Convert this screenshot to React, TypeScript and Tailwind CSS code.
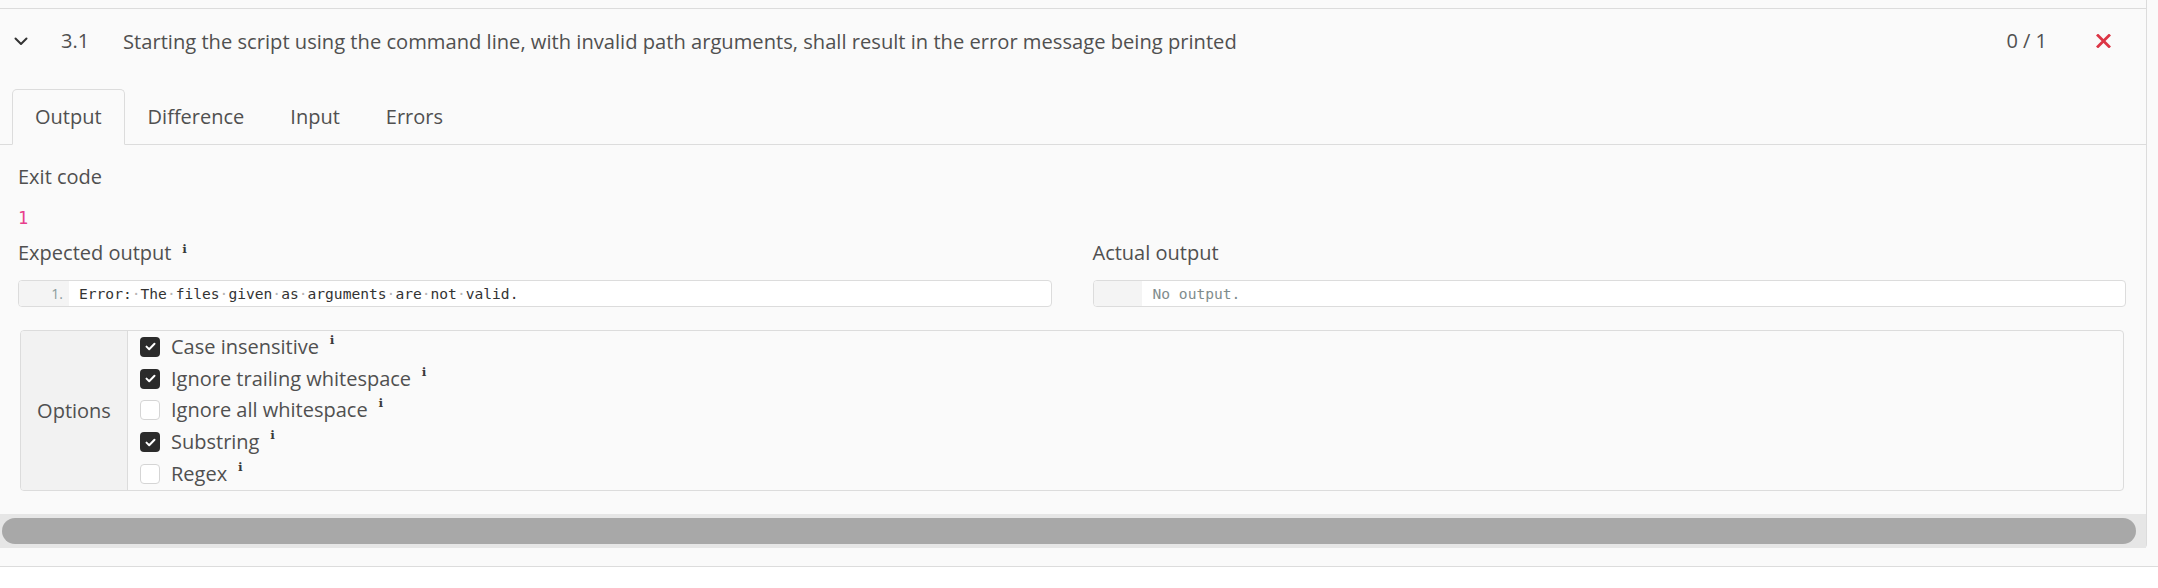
import React from "react";

const SANS = { fontFamily: '"Open Sans", "Noto Sans", sans-serif' };

function Info() {
  return (
    <span
      className="relative top-[-7px] ml-[11px] text-[12px] leading-none text-[#3a3a3a]"
      style={{ fontFamily: '"DejaVu Sans", sans-serif' }}
    >
      ℹ
    </span>
  );
}

function Check({ checked }: { checked: boolean }) {
  return checked ? (
    <span className="flex h-[20px] w-[20px] items-center justify-center rounded-[4px] bg-[#2b2b2b]">
      <svg width="11" height="9" viewBox="0 0 11 9" fill="none">
        <path d="M1.5 4.6 L4.2 7.2 L9.5 1.8" stroke="#fff" strokeWidth="2" strokeLinecap="round" strokeLinejoin="round" />
      </svg>
    </span>
  ) : (
    <span className="h-[20px] w-[20px] rounded-[4px] border border-[#d5d5d5] bg-white" />
  );
}

function CodeLine({ text }: { text: string }) {
  const parts = text.split(" ");
  return (
    <span>
      {parts.map((p, i) => (
        <React.Fragment key={i}>
          {i > 0 && <span className="text-[#b5b5b5]">·</span>}
          {p}
        </React.Fragment>
      ))}
    </span>
  );
}

export default function App() {
  const options: [string, boolean][] = [
    ["Case insensitive", true],
    ["Ignore trailing whitespace", true],
    ["Ignore all whitespace", false],
    ["Substring", true],
    ["Regex", false],
  ];
  return (
    <div className="h-[588px] w-[2158px] overflow-hidden bg-white text-[20px] text-[#505050]" style={SANS}>
      <div className="border-b border-[#dcdcdc] bg-[#fafafa] pb-[18px]">
        <div className="w-[2147px] rounded-br-[4px] border-r border-[#dcdcdc] pt-[8px]">
          <div className="border-t border-[#dcdcdc]">
            {/* header */}
            <div className="flex h-[64px] items-center">
              <div className="flex w-[61px] pl-[14px]">
                <svg width="14" height="9" viewBox="0 0 14 9" fill="none">
                  <path d="M1.5 1.5 L7 7 L12.5 1.5" stroke="#333" strokeWidth="2" strokeLinecap="round" strokeLinejoin="round" />
                </svg>
              </div>
              <div className="w-[62px] leading-[30px]">3.1</div>
              <div className="flex-1 text-[20.15px] leading-[30px]">
                Starting the script using the command line, with invalid path arguments, shall result in the error message being printed
              </div>
              <div className="leading-[30px]">0 / 1</div>
              <div className="ml-[49px] mr-[35px] flex">
                <svg width="15" height="14" viewBox="0 0 15 14" fill="none">
                  <path d="M2 1.5 L13 12.5 M13 1.5 L2 12.5" stroke="#dc3545" strokeWidth="2.8" strokeLinecap="square" />
                </svg>
              </div>
            </div>
            {/* tabs */}
            <div className="mt-[16px] flex border-b border-[#dcdcdc] pl-[12px]">
              {["Output", "Difference", "Input", "Errors"].map((t, i) => (
                <div
                  key={t}
                  className={
                    i === 0
                      ? "-mb-px rounded-t-[5px] border border-[#dcdcdc] border-b-[#fafafa] bg-[#fafafa] px-[22px] py-[12px] leading-[30px]"
                      : "-mb-px rounded-t-[5px] border border-transparent px-[22px] py-[12px] leading-[30px]"
                  }
                >
                  {t}
                </div>
              ))}
            </div>
            {/* content */}
            <div className="pl-[18px] pr-[20px]">
              <div className="mt-[17px] leading-[30px]">Exit code</div>
              <div
                className="mt-[11px] text-[17px] leading-[30px] text-[#e83e8c]"
                style={{ fontFamily: '"DejaVu Sans Mono", monospace' }}
              >
                1
              </div>
              <div className="mt-[5px] grid grid-cols-2 gap-x-[41px]">
                <div>
                  <div className="h-[30px] leading-[30px]">
                    Expected output
                    <Info />
                  </div>
                  <div className="mt-[12px] flex h-[27px] overflow-hidden rounded-[4px] border border-[#dcdcdc] bg-white">
                    <div className="flex w-[50px] items-center justify-end bg-[#f4f4f4] pr-[6px] text-[14px] text-[#8a9a9a]">
                      1.
                    </div>
                    <div
                      className="flex items-center pl-[10px] text-[14.6px] text-[#333]"
                      style={{ fontFamily: '"DejaVu Sans Mono", monospace' }}
                    >
                      <CodeLine text="Error: The files given as arguments are not valid." />
                    </div>
                  </div>
                </div>
                <div>
                  <div className="h-[30px] leading-[30px]">Actual output</div>
                  <div className="mt-[12px] flex h-[27px] overflow-hidden rounded-[4px] border border-[#dcdcdc] bg-white">
                    <div className="w-[48px] bg-[#f4f4f4]" />
                    <div
                      className="flex items-center pl-[11px] text-[14.6px] text-[#7f8c8d]"
                      style={{ fontFamily: '"DejaVu Sans Mono", monospace' }}
                    >
                      No output.
                    </div>
                  </div>
                </div>
              </div>
              {/* options */}
              <div className="ml-[2px] mr-[2px] mt-[23px] flex h-[161px] overflow-hidden rounded-[4px] border border-[#dcdcdc]">
                <div className="flex w-[107px] items-center justify-center border-r border-[#dcdcdc] bg-[#f2f2f2]">
                  Options
                </div>
                <div className="flex flex-col pl-[12px]">
                  {options.map(([label, checked]) => (
                    <div key={label} className="flex h-[31.8px] items-center">
                      <Check checked={checked} />
                      <span className="ml-[11px] leading-[30px]">{label}</span>
                      <Info />
                    </div>
                  ))}
                </div>
              </div>
            </div>
            {/* scrollbar */}
            <div className="mt-[23px] flex h-[34px] items-center bg-[#e6e6e6] pl-[2px] pr-[10px]">
              <div className="h-[26px] w-full rounded-full bg-[#a8a8a8]" />
            </div>
          </div>
        </div>
      </div>
    </div>
  );
}
